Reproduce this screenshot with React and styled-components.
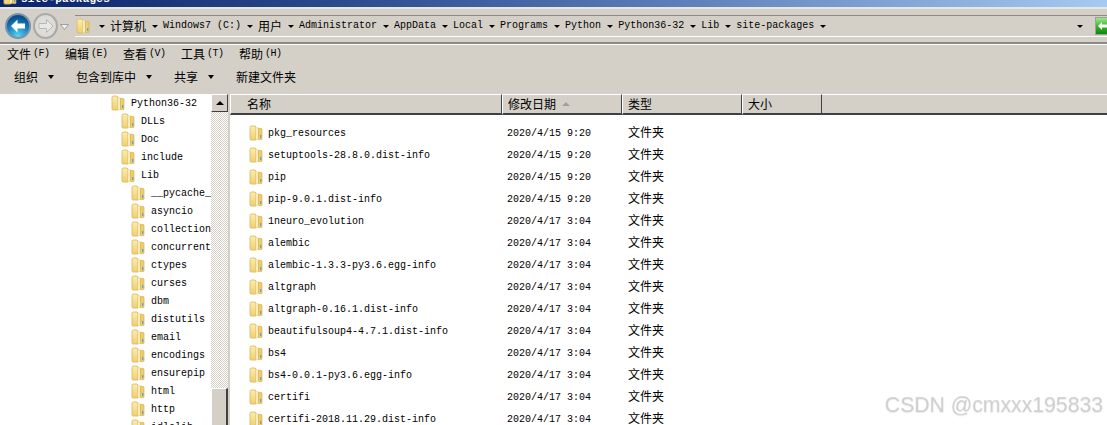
import React from "react";
import styled, { createGlobalStyle } from "styled-components";

const Global = createGlobalStyle`
  html, body { margin: 0; padding: 0; background: #fff; }
  * { box-sizing: border-box; }
`;

const LATIN = `"Liberation Mono", "Noto Sans CJK SC", monospace`;
const CJK = `"Noto Sans CJK SC", "Liberation Mono", sans-serif`;

const Window = styled.div`
  position: relative;
  width: 1107px;
  height: 425px;
  overflow: hidden;
  background: #d4d0c8;
  display: flex;
  flex-direction: column;
  color: #000;
  font-family: ${LATIN};
  font-size: 10px;
`;

const TitleBar = styled.div`
  flex: none;
  height: 9px;
  padding: 0 0 2px 3px;
  display: flex;
  align-items: flex-end;
  gap: 4px;
  overflow: hidden;
  border-bottom: 2px solid #e6e6e2;
  background: linear-gradient(90deg, #0a246a 0%, #2a4a8a 30%, #5a7cb8 60%, #a6caf0 100%);
`;

const TitleText = styled.span`
  font-weight: bold;
  font-size: 11px;
  letter-spacing: 0.25px;
  line-height: 12px;
  color: #fff;
`;

const NavBar = styled.div`
  flex: none;
  height: 35px;
  display: flex;
  align-items: flex-start;
  border-bottom: 2px solid #8c8a86;
  box-shadow: 0 1px 0 #fff;
  padding: 4px 0 0 5px;
`;

const RoundButton = styled.div`
  flex: none;
  width: ${(p) => (p.$on ? 26 : 25)}px;
  height: 26px;
  border-radius: 50%;
  display: flex;
  align-items: center;
  justify-content: center;
  margin-right: 2px;
  background: ${(p) =>
    p.$on
      ? "radial-gradient(circle at 50% 95%, #5ad6f0 0%, #1a86c6 45%, #0b4f8c 80%, #0a3f78 100%)"
      : "radial-gradient(circle at 50% 50%, #e4e3df 0%, #dcdbd7 60%, #c8c8c6 100%)"};
  border: 2px solid ${(p) => (p.$on ? "#7b93ab" : "#a9a9a8")};
`;

const SmallDrop = styled.svg`
  flex: none;
  margin: 11px 6px 0 0;
`;

const AddressBox = styled.div`
  flex: 1;
  height: 22px;
  margin-top: 2px;
  display: flex;
  align-items: center;
  border-top: 1px solid #8c8a86;
  border-bottom: 1px solid #fff;
  padding-left: 1px;
`;

const Crumb = styled.span`
  flex: none;
  font-size: ${(p) => (p.$cjk ? 12 : 10)}px;
  font-family: ${(p) => (p.$cjk ? CJK : LATIN)};
  line-height: 16px;
  margin-right: 6px;
`;

const Caret = styled.i`
  flex: none;
  width: 0;
  height: 0;
  border-left: 3px solid transparent;
  border-right: 3px solid transparent;
  border-top: 3px solid #000;
  margin: 1px ${(p) => p.$mr ?? 5}px 0 ${(p) => p.$ml ?? 0}px;
`;

const Spacer = styled.div`
  flex: 1;
`;

const GoButton = styled.div`
  flex: none;
  width: 12px;
  height: 18px;
  margin-left: 12px;
  border: 1px solid #a0a09a;
  border-right: none;
  background: linear-gradient(180deg, #9be88a 0%, #35b02a 55%, #0c8a0c 100%);
  display: flex;
  align-items: center;
  padding-left: 1px;
`;

const MenuBar = styled.div`
  flex: none;
  height: 22px;
  display: flex;
  align-items: center;
  gap: 18px;
  padding: 0 0 3px 7px;
`;

const MenuItem = styled.span`
  display: inline-flex;
  align-items: center;
  width: 40px;
  font-family: ${CJK};
  font-size: 12px;
  line-height: 16px;
  white-space: nowrap;
`;

const Hotkey = styled.span`
  font-family: ${LATIN};
  font-size: 10px;
  letter-spacing: -0.5px;
  margin-left: 2px;
`;

const CommandBar = styled.div`
  flex: none;
  height: 27px;
  display: flex;
  align-items: center;
  padding: 0 0 5px 14px;
`;

const Command = styled.span`
  display: inline-flex;
  align-items: center;
  font-family: ${CJK};
  font-size: 12px;
  line-height: 16px;
  margin-right: 22px;
`;

const CommandCaret = styled.i`
  width: 0;
  height: 0;
  margin-left: 10px;
  border-left: 3.5px solid transparent;
  border-right: 3.5px solid transparent;
  border-top: 4px solid #000;
`;

const Body = styled.div`
  flex: 1;
  min-height: 0;
  display: flex;
  margin-top: 1px;
`;

const Tree = styled.div`
  flex: none;
  width: 211px;
  background: #fff;
  overflow: hidden;
`;

const TreeRow = styled.div`
  height: 18px;
  display: flex;
  align-items: center;
  gap: 6px;
  padding-left: ${(p) => 111 + p.$level * 10}px;
  white-space: nowrap;
`;

const ScrollBar = styled.div`
  flex: none;
  width: 17px;
  display: flex;
  flex-direction: column;
`;

const ScrollUp = styled.div`
  flex: none;
  height: 18px;
  display: flex;
  align-items: center;
  justify-content: center;
  border-top: 1px solid #fff;
  border-left: 1px solid #fff;
  border-right: 1px solid #404040;
  border-bottom: 1px solid #404040;
  background: #d4d0c8;
  &::after {
    content: "";
    border-left: 4px solid transparent;
    border-right: 4px solid transparent;
    border-bottom: 4px solid #000;
  }
`;

const ScrollTrack = styled.div`
  flex: none;
  height: 276px;
  background-color: #fff;
  background-image: conic-gradient(#d4d0c8 25%, #fff 0 50%, #d4d0c8 0 75%, #fff 0);
  background-size: 2px 2px;
`;

const ScrollThumb = styled.div`
  flex: 1;
  background: #d4d0c8;
  border-top: 1px solid #fff;
  border-left: 1px solid #fff;
  border-right: 2px solid #404040;
`;

const Pane = styled.div`
  flex: 1;
  min-width: 0;
  margin-left: 2px;
  background: #fff;
  display: flex;
  flex-direction: column;
  overflow: hidden;
`;

const HeaderRow = styled.div`
  flex: none;
  height: 21px;
  display: flex;
  background: #d4d0c8;
`;

const HeaderCell = styled.div`
  flex: none;
  width: ${(p) => p.$w}px;
  display: flex;
  align-items: center;
  gap: 6px;
  padding-left: ${(p) => p.$pl}px;
  font-family: ${CJK};
  font-size: 12px;
  line-height: 16px;
  border-top: 1px solid #fff;
  border-left: 1px solid #fff;
  border-right: 1px solid #404040;
  border-bottom: 2px solid #404040;
`;

const HeaderFill = styled.div`
  flex: 1;
  border-top: 1px solid #fff;
  border-bottom: 2px solid #404040;
`;

const SortMark = styled.i`
  width: 0;
  height: 0;
  margin-top: -1px;
  border-left: 4px solid transparent;
  border-right: 4px solid transparent;
  border-bottom: 4px solid #a0a0a0;
`;

const List = styled.div`
  flex: 1;
  padding-top: 7px;
`;

const Row = styled.div`
  height: 22px;
  display: grid;
  grid-template-columns: 38px 239px 120px 1fr;
  align-items: center;
  white-space: nowrap;
`;

const RowIcon = styled.div`
  display: flex;
  padding-left: 19px;
`;

const TypeText = styled.span`
  font-family: ${CJK};
  font-size: 12px;
  line-height: 16px;
  padding-left: 1px;
  margin-bottom: 2px;
`;

const Watermark = styled.div`
  position: absolute;
  right: 4px;
  bottom: 8px;
  font-family: "Liberation Sans", sans-serif;
  font-size: 21.2px;
  line-height: 24px;
  color: rgba(180, 180, 180, 0.55);
  text-shadow: 0 1px 1px rgba(215, 215, 215, 0.5);
  white-space: nowrap;
`;

function Folder() {
  return (
    <svg width={14} height={16} viewBox="0 0 14 16" style={{ flex: "none", display: "block" }}>
      <defs>
        <linearGradient id="fdBack" x1="0" y1="0" x2="0" y2="1">
          <stop offset="0" stopColor="#fbedb0" />
          <stop offset="1" stopColor="#efcf72" />
        </linearGradient>
        <linearGradient id="fdFlap" x1="0" y1="0" x2="1" y2="0">
          <stop offset="0" stopColor="#fffbe0" />
          <stop offset="1" stopColor="#f7e29a" />
        </linearGradient>
      </defs>
      <path d="M1 2.5 Q1 1 2.5 1 L6 1 L7 2 L7 15 L2 15 Q1 15 1 14 Z" fill="url(#fdBack)" stroke="#dcbb62" strokeWidth="0.9" />
      <path d="M7 2 L9.5 3.2 L9.5 14 L7 15 Z" fill="url(#fdFlap)" stroke="#e6cb7c" strokeWidth="0.5" />
      <path d="M9.5 3.2 L12.5 3.6 Q13 3.7 13 4.5 L13 14 Q13 14.6 12.4 14.6 L9.5 14.6 Z" fill="#f0cd68" stroke="#d6b254" strokeWidth="0.7" />
      <rect x="11" y="10" width="1.3" height="3" fill="#5aa6d6" />
    </svg>
  );
}

const crumbs = [
  ["计算机", true],
  ["Windows7 (C:)"],
  ["用户", true],
  ["Administrator"],
  ["AppData"],
  ["Local"],
  ["Programs"],
  ["Python"],
  ["Python36-32"],
  ["Lib"],
  ["site-packages"],
];

const menus = [
  ["文件", "(F)"],
  ["编辑", "(E)"],
  ["查看", "(V)"],
  ["工具", "(T)"],
  ["帮助", "(H)"],
];

const tree = [
  ["Python36-32", 0],
  ["DLLs", 1],
  ["Doc", 1],
  ["include", 1],
  ["Lib", 1],
  ["__pycache__", 2],
  ["asyncio", 2],
  ["collections", 2],
  ["concurrent", 2],
  ["ctypes", 2],
  ["curses", 2],
  ["dbm", 2],
  ["distutils", 2],
  ["email", 2],
  ["encodings", 2],
  ["ensurepip", 2],
  ["html", 2],
  ["http", 2],
  ["idlelib", 2],
];

const files = [
  ["pkg_resources", "2020/4/15 9:20"],
  ["setuptools-28.8.0.dist-info", "2020/4/15 9:20"],
  ["pip", "2020/4/15 9:20"],
  ["pip-9.0.1.dist-info", "2020/4/15 9:20"],
  ["1neuro_evolution", "2020/4/17 3:04"],
  ["alembic", "2020/4/17 3:04"],
  ["alembic-1.3.3-py3.6.egg-info", "2020/4/17 3:04"],
  ["altgraph", "2020/4/17 3:04"],
  ["altgraph-0.16.1.dist-info", "2020/4/17 3:04"],
  ["beautifulsoup4-4.7.1.dist-info", "2020/4/17 3:04"],
  ["bs4", "2020/4/17 3:04"],
  ["bs4-0.0.1-py3.6.egg-info", "2020/4/17 3:04"],
  ["certifi", "2020/4/17 3:04"],
  ["certifi-2018.11.29.dist-info", "2020/4/17 3:04"],
];

export default function App() {
  return (
    <Window>
      <Global />
      <TitleBar>
        <Folder />
        <TitleText>site-packages</TitleText>
      </TitleBar>
      <NavBar>
        <RoundButton $on>
          <svg width="16" height="14" viewBox="0 0 16 14">
            <path d="M7.5 0.5 L1 7 L7.5 13.5 L7.5 9.5 L15 9.5 L15 4.5 L7.5 4.5 Z" fill="#fff" />
          </svg>
        </RoundButton>
        <RoundButton>
          <svg width="16" height="14" viewBox="0 0 16 14">
            <path d="M8.5 0.5 L15 7 L8.5 13.5 L8.5 9.5 L1 9.5 L1 4.5 L8.5 4.5 Z" fill="#e8e8e6" stroke="#b8b8b6" />
          </svg>
        </RoundButton>
        <SmallDrop width="9" height="6" viewBox="0 0 9 6">
          <path d="M0.5 0.5 H8.5 L4.5 5.5 Z" fill="#efefee" stroke="#8a8f96" strokeWidth="0.8" />
        </SmallDrop>
        <AddressBox>
          <Folder />
          <Caret $ml={9} />
          {crumbs.map(([label, cjk]) => (
            <React.Fragment key={label}>
              <Crumb $cjk={cjk}>{label}</Crumb>
              <Caret />
            </React.Fragment>
          ))}
          <Spacer />
          <Caret $mr={0} />
          <GoButton>
            <svg width="10" height="10" viewBox="0 0 10 10">
              <path d="M5 1 L1 5 L5 9 V6.5 H10 V3.5 H5 Z" fill="#fff" />
            </svg>
          </GoButton>
        </AddressBox>
      </NavBar>
      <MenuBar>
        {menus.map(([label, key]) => (
          <MenuItem key={label}>
            {label}
            <Hotkey>{key}</Hotkey>
          </MenuItem>
        ))}
      </MenuBar>
      <CommandBar>
        <Command>
          组织
          <CommandCaret />
        </Command>
        <Command>
          包含到库中
          <CommandCaret />
        </Command>
        <Command>
          共享
          <CommandCaret />
        </Command>
        <Command>新建文件夹</Command>
      </CommandBar>
      <Body>
        <Tree>
          {tree.map(([name, level]) => (
            <TreeRow key={name} $level={level}>
              <Folder />
              <span>{name}</span>
            </TreeRow>
          ))}
        </Tree>
        <ScrollBar>
          <ScrollUp />
          <ScrollTrack />
          <ScrollThumb />
        </ScrollBar>
        <Pane>
          <HeaderRow>
            <HeaderCell $w={272} $pl={16}>名称</HeaderCell>
            <HeaderCell $w={120} $pl={5}>
              修改日期
              <SortMark />
            </HeaderCell>
            <HeaderCell $w={120} $pl={5}>类型</HeaderCell>
            <HeaderCell $w={80} $pl={5}>大小</HeaderCell>
            <HeaderFill />
          </HeaderRow>
          <List>
            {files.map(([name, date]) => (
              <Row key={name}>
                <RowIcon>
                  <Folder />
                </RowIcon>
                <span>{name}</span>
                <span>{date}</span>
                <TypeText>文件夹</TypeText>
              </Row>
            ))}
          </List>
        </Pane>
      </Body>
      <Watermark>CSDN @cmxxx195833</Watermark>
    </Window>
  );
}
